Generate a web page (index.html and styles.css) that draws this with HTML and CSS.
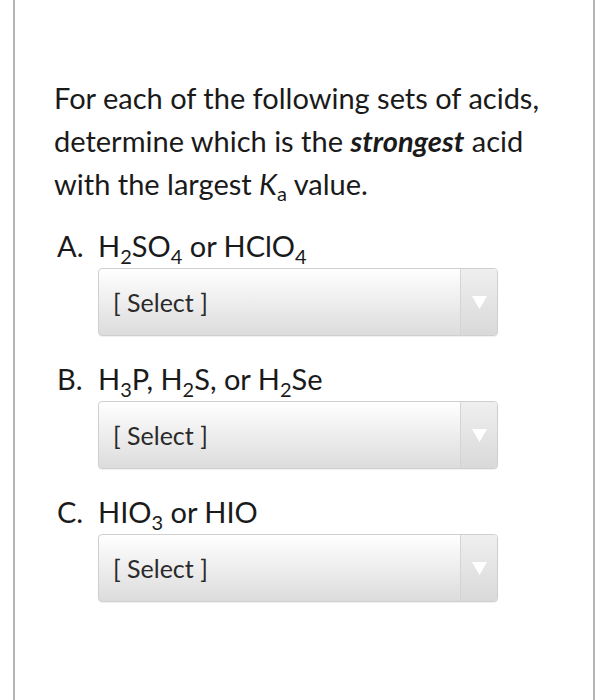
FILE: index.html
```html
<!DOCTYPE html>
<html lang="en">
<head>
<meta charset="utf-8">
<title>Acid strength</title>
<link rel="stylesheet" href="styles.css">
</head>
<body>
<div class="card">
  <p class="prompt">For each of the following sets of acids, determine which is the <strong><em>strongest</em></strong> acid with the largest <em>K</em><sub class="ka">a</sub> value.</p>
  <div class="item">
    <div class="label"><span class="letter">A.</span><span>H<sub>2</sub>SO<sub>4</sub> or HClO<sub>4</sub></span></div>
    <div class="select"><span class="value">[ Select ]</span><span class="arrow"><svg width="15" height="13" viewBox="0 0 15 13"><path d="M0 0 H15 L7.5 13 Z" fill="#fff"/></svg></span></div>
  </div>
  <div class="item">
    <div class="label"><span class="letter">B.</span><span>H<sub>3</sub>P, H<sub>2</sub>S, or H<sub>2</sub>Se</span></div>
    <div class="select"><span class="value">[ Select ]</span><span class="arrow"><svg width="15" height="13" viewBox="0 0 15 13"><path d="M0 0 H15 L7.5 13 Z" fill="#fff"/></svg></span></div>
  </div>
  <div class="item">
    <div class="label"><span class="letter">C.</span><span>HIO<sub>3</sub> or HIO</span></div>
    <div class="select"><span class="value">[ Select ]</span><span class="arrow"><svg width="15" height="13" viewBox="0 0 15 13"><path d="M0 0 H15 L7.5 13 Z" fill="#fff"/></svg></span></div>
  </div>
</div>
</body>
</html>
```

FILE: styles.css
```css
html, body {
  margin: 0;
  padding: 0;
  background: #fff;
}
body {
  font-family: Lato, "Open Sans", sans-serif;
  color: #1a1a1a;
}
.card {
  margin-left: 13px;
  width: 582px;
  height: 700px;
  border-left: 2px solid #b5b5b5;
  border-right: 2px solid #b5b5b5;
  padding: 76px 0 0 39px;
  box-sizing: border-box;
}
.prompt {
  margin: 0;
  width: 500px;
  font-size: 29px;
  line-height: 43px;
}
.prompt strong em {
  font-weight: 700;
}
.prompt sub.ka {
  font-size: 20px;
  vertical-align: -6px;
  line-height: 0;
}
.item {
  margin-top: 23px;
}
.item + .item {
  margin-top: 25px;
}
.label {
  display: flex;
  font-size: 29px;
  line-height: 36px;
}
.label sub {
  font-size: 20px;
  vertical-align: -7px;
  line-height: 0;
}
.letter {
  width: 41px;
  padding-left: 3px;
}
.select {
  margin-left: 44px;
  margin-top: 4px;
  width: 400px;
  height: 68px;
  box-sizing: border-box;
  border: 1px solid #cfcfcf;
  border-radius: 4px;
  background: linear-gradient(#ffffff, #dcdcdc);
  display: flex;
  align-items: stretch;
  box-shadow: 0 1px 1px rgba(0,0,0,0.06);
}
.value {
  flex: 1;
  display: flex;
  align-items: center;
  padding-left: 14px;
  font-size: 25px;
  color: #2a2a2a;
}
.arrow {
  width: 36px;
  border-left: 1px solid #d4d4d4;
  background: linear-gradient(#efefef, #d9d9d9);
  display: flex;
  align-items: center;
  justify-content: center;
  border-radius: 0 3px 3px 0;
}
```
